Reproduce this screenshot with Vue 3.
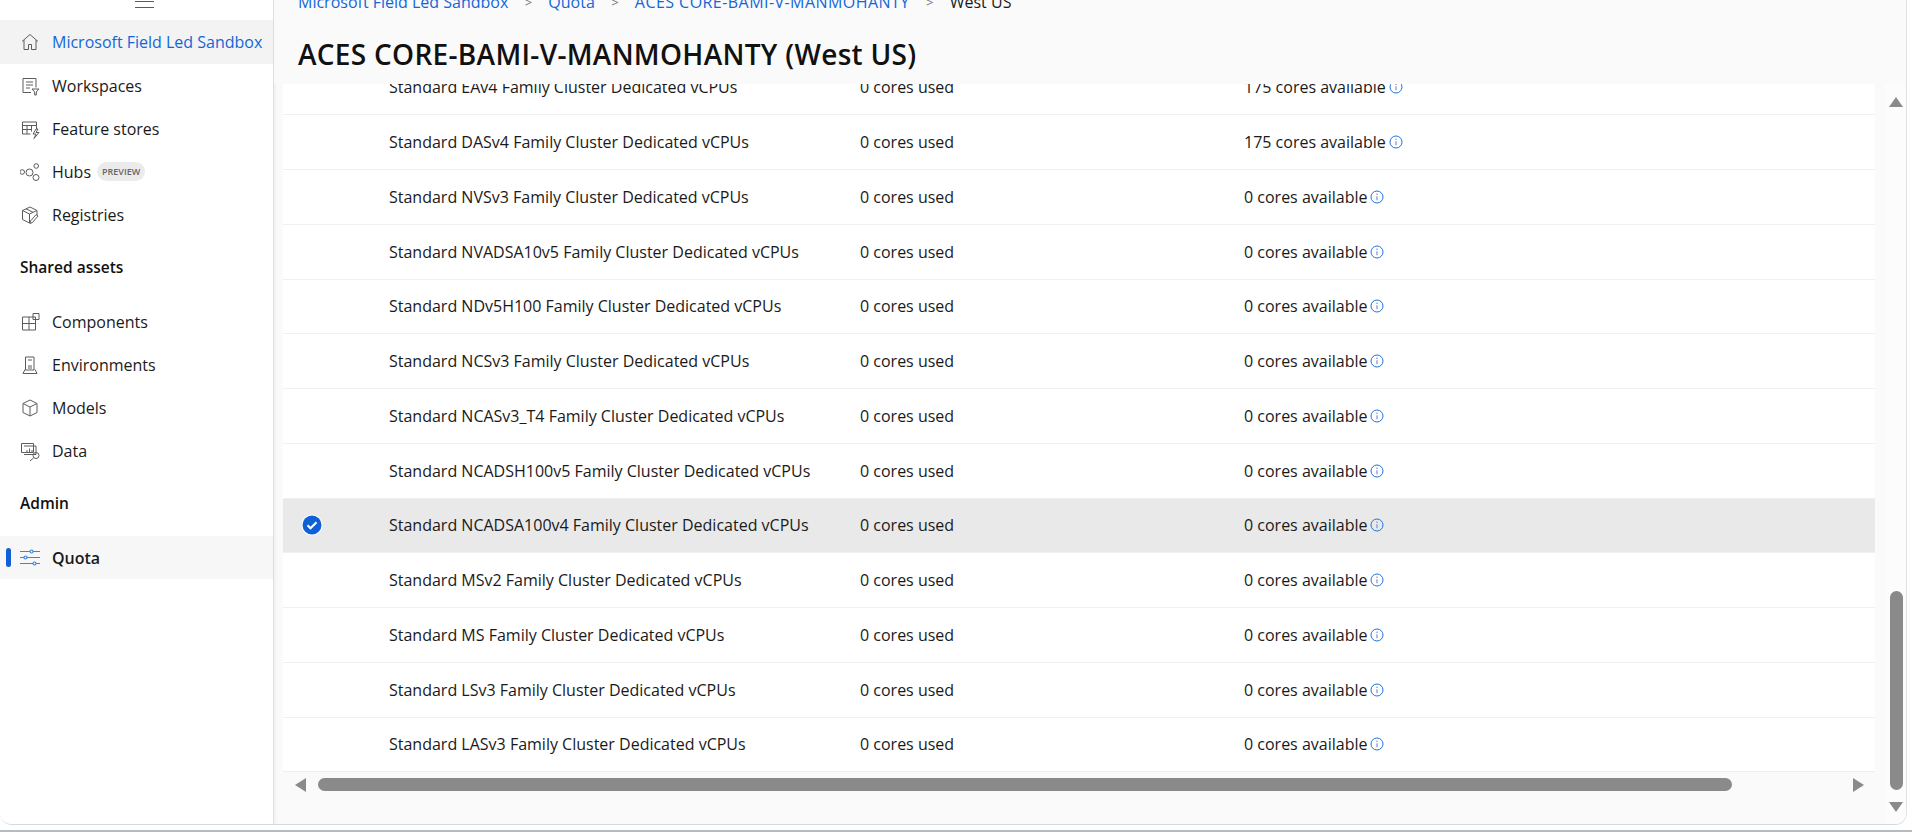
<script setup>
const navTop = [
  { label: 'Workspaces', paths: ['M3 2.500h13v9M3 2.500v14h8', 'M6 6h7M6 9h7M6 12h4', 'M12 13h7l-2.700 3v3h-1.600v-3z'] },
  { label: 'Feature stores', paths: ['M2.500 3h14v7M2.500 3v12h8M2.500 6.500h14M2.500 10.500h9M7 6.500V15M11.500 6.500v6', 'M16 10l-3 5h3l-2 4.500 5-6h-3l2-3.500z'] },
  { label: 'Hubs', badge: 'PREVIEW', paths: ['M4.500 10a2.300 2.300 0 1 1-4.600 0 2.300 2.300 0 0 1 4.600 0z', 'M13 10.500a3.500 3.500 0 1 1-7 0 3.500 3.500 0 0 1 7 0z', 'M18.500 4a2.300 2.300 0 1 1-4.600 0 2.300 2.300 0 0 1 4.600 0zM19 15.500a3 3 0 1 1-6 0 3 3 0 0 1 6 0z'] },
  { label: 'Registries', paths: ['M2.500 5.500L10 2l7 3.500v5M2.500 5.500v9l7 3.500M2.500 5.500l7 3.500v9M9.500 9l7.500-3.500M6 3.800l7 3.500', 'M18 11l-5.500 6.500-2.500 1 .7-2.700L16.200 9.500z'] },
]
const navShared = [
  { label: 'Components', paths: ['M2.500 5h13v13h-13zM9 5v13M2.500 11.500h13', 'M13 1.500h6v6h-6z'] },
  { label: 'Environments', paths: ['M5.500 2h8.500v13H5.500zM8 5h4M8 11h4M8 13h4', 'M5 14.500L3 18.500h14l-2-4M3 18.500h14'] },
  { label: 'Models', paths: ['M10 2l7 3.500v9L10 18l-7-3.500v-9zM3 5.500l7 3.500 7-3.500M10 9v9'] },
  { label: 'Data', paths: ['M1.500 2.500h12v9h-12z', 'M4 5h12v8.500H4M7 11V9M9.500 11V7.500M12 11V9', 'M19 14.500a3 3 0 1 1-6 0 3 3 0 0 1 6 0zM13.500 17L10 20'] },
]

const rows = [
  { name: 'Standard EAv4 Family Cluster Dedicated vCPUs', available: 175 },
  { name: 'Standard DASv4 Family Cluster Dedicated vCPUs', available: 175 },
  { name: 'Standard NVSv3 Family Cluster Dedicated vCPUs', available: 0 },
  { name: 'Standard NVADSA10v5 Family Cluster Dedicated vCPUs', available: 0 },
  { name: 'Standard NDv5H100 Family Cluster Dedicated vCPUs', available: 0 },
  { name: 'Standard NCSv3 Family Cluster Dedicated vCPUs', available: 0 },
  { name: 'Standard NCASv3_T4 Family Cluster Dedicated vCPUs', available: 0 },
  { name: 'Standard NCADSH100v5 Family Cluster Dedicated vCPUs', available: 0 },
  { name: 'Standard NCADSA100v4 Family Cluster Dedicated vCPUs', available: 0, selected: true },
  { name: 'Standard MSv2 Family Cluster Dedicated vCPUs', available: 0 },
  { name: 'Standard MS Family Cluster Dedicated vCPUs', available: 0 },
  { name: 'Standard LSv3 Family Cluster Dedicated vCPUs', available: 0 },
  { name: 'Standard LASv3 Family Cluster Dedicated vCPUs', available: 0 },
]
</script>

<template>
  <div class="page">
    <div class="shell">
      <aside class="sidebar">
        <div class="burger"><span></span><span></span></div>
        <a class="nav-item home">
          <svg class="icon" viewBox="0 0 20 20"><path d="M2 9.500L10 2.500l8 7M4 8v9.500h4.500v-5h3v5H16V8" /></svg>
          Microsoft Field Led Sandbox
        </a>
        <a v-for="item in navTop" :key="item.label" class="nav-item">
          <svg class="icon" viewBox="0 0 20 20"><path v-for="d in item.paths" :key="d" :d="d" /></svg>
          {{ item.label }}
          <span v-if="item.badge" class="badge">{{ item.badge }}</span>
        </a>
        <h3 class="section">Shared assets</h3>
        <a v-for="item in navShared" :key="item.label" class="nav-item">
          <svg class="icon" viewBox="0 0 20 20"><path v-for="d in item.paths" :key="d" :d="d" /></svg>
          {{ item.label }}
        </a>
        <h3 class="section">Admin</h3>
        <a class="nav-item quota">
          <span class="marker"></span>
          <svg class="icon blue" viewBox="0 0 20 20">
            <path d="M0 3.500h10M13 3.500h7M0 9.500h4M7 9.500h13M0 15.500h13M16 15.500h4" />
            <circle cx="11.500" cy="3.500" r="1.500" /><circle cx="5.500" cy="9.500" r="1.500" /><circle cx="14.500" cy="15.500" r="1.500" />
          </svg>
          Quota
        </a>
      </aside>

      <main class="content">
        <header class="head">
          <nav class="crumbs">
            <a>Microsoft Field Led Sandbox</a><i>&gt;</i>
            <a>Quota</a><i>&gt;</i>
            <a class="caps">ACES CORE-BAMI-V-MANMOHANTY</a><i>&gt;</i>
            <span>West US</span>
          </nav>
          <h1>ACES CORE-BAMI-V-MANMOHANTY (West US)</h1>
        </header>

        <div class="table-area">
          <div class="table-wrap">
            <div class="table">
              <div v-for="row in rows" :key="row.name" class="row" :class="{ selected: row.selected }">
                <div class="check">
                  <svg v-if="row.selected" width="22" height="22" viewBox="0 0 22 22">
                    <circle cx="11" cy="11" r="10.500" fill="#fff" />
                    <circle cx="11" cy="11" r="9.500" fill="#0f5fd7" />
                    <path d="M6.500 11.300l3 3 6-6" fill="none" stroke="#fff" stroke-width="2.200" />
                  </svg>
                </div>
                <div class="name">{{ row.name }}</div>
                <div class="used">0 cores used</div>
                <div class="avail">
                  {{ row.available }} cores available
                  <svg class="info" width="14" height="14" viewBox="0 0 14 14">
                    <circle cx="7" cy="7" r="6" fill="none" stroke="#1f74e0" />
                    <path d="M7 6.200v4" stroke="#7f8fd0" stroke-width="1.200" />
                    <circle cx="7" cy="4.200" r=".8" fill="#7f8fd0" />
                  </svg>
                </div>
              </div>
            </div>
            <div class="hbar">
              <span class="arrow left"></span>
              <span class="hthumb"></span>
              <span class="arrow right"></span>
            </div>
          </div>
          <div class="vbar">
            <span class="arrow up"></span>
            <div class="vtrack"><span class="vthumb"></span></div>
            <span class="arrow down"></span>
          </div>
        </div>
      </main>
    </div>
  </div>
</template>

<style>
html, body {
  margin: 0;
  background: #fff;
  overflow: hidden;
}
</style>

<style scoped>
.page {
  height: 832px;
  box-sizing: border-box;
  border-bottom: 2px solid #b4bcc2;
  overflow: hidden;
  font-family: "Open Sans", "Noto Sans", sans-serif;
  font-size: 16px;
  color: #1a1a1a;
}
.shell {
  display: flex;
  height: 825px;
  margin-right: 5px;
  border-right: 1px solid #e2e2e2;
  border-bottom: 1px solid #d8d8d8;
  border-radius: 0 0 12px 12px;
  overflow: hidden;
  box-sizing: border-box;
}
.sidebar {
  width: 273px;
  flex: none;
  background: #fff;
  border-right: 1px solid #dedede;
  box-shadow: 1px 0 4px rgba(0, 0, 0, 0.06);
  z-index: 1;
}
.burger {
  height: 20px;
  display: flex;
  flex-direction: column;
  align-items: center;
  gap: 5px;
  padding: 1px 0 0 16px;
  box-sizing: border-box;
}
.burger span {
  width: 19px;
  height: 1px;
  background: #1466d8;
}
.nav-item {
  display: flex;
  align-items: center;
  height: 43px;
  padding-left: 20px;
  position: relative;
  white-space: nowrap;
}
.home {
  height: 44px;
  background: #f3f3f3;
  color: #1466d8;
}
.icon {
  width: 20px;
  height: 20px;
  margin-right: 12px;
  flex: none;
  fill: none;
  stroke: #5c5c5c;
  stroke-width: 1;
}
.icon.blue {
  stroke: #3f86cf;
  stroke-width: 1.200;
}
.badge {
  margin-left: 6px;
  padding: 0 5px;
  height: 19px;
  line-height: 19px;
  border-radius: 10px;
  background: #ebebeb;
  color: #666;
  font-size: 9px;
  font-weight: 600;
}
.section {
  margin: 0;
  height: 64px;
  padding: 20px 0 0 20px;
  box-sizing: border-box;
  font-size: 15.500px;
  font-weight: 600;
  color: #111;
}
.quota {
  background: #f7f7f7;
  font-weight: 600;
}
.marker {
  position: absolute;
  left: 6px;
  top: 12px;
  width: 5px;
  height: 19px;
  border-radius: 3px;
  background: #0f5fd7;
}
.content {
  flex: 1;
  min-width: 0;
  background: #fafafa;
  display: flex;
  flex-direction: column;
  overflow: hidden;
}
.head {
  height: 84px;
  flex: none;
  padding-left: 24px;
  box-sizing: border-box;
  position: relative;
  z-index: 1;
  background: #fafafa;
  overflow: hidden;
}
.crumbs {
  display: flex;
  align-items: center;
  height: 20px;
  margin-top: -8px;
  white-space: nowrap;
  color: #1466d8;
}
.crumbs i {
  width: 40px;
  text-align: center;
  color: #777;
  font-style: normal;
  font-size: 13px;
}
.crumbs .caps {
  letter-spacing: 0.450px;
}
.crumbs span {
  color: #1a1a1a;
}
h1 {
  margin: 23px 0 0;
  font-size: 28px;
  line-height: 38px;
  letter-spacing: 0.300px;
  font-weight: 600;
  color: #111;
  white-space: nowrap;
}
.table-area {
  flex: 1;
  display: flex;
  min-height: 0;
  padding-left: 9px;
}
.table-wrap {
  width: 1592px;
  flex: none;
  overflow: hidden;
}
.table {
  height: 688px;
  overflow: hidden;
  background: #fff;
  border-bottom: 1px solid #eee;
  box-sizing: border-box;
}
.row {
  display: grid;
  grid-template-columns: 106px 471px 384px 1fr;
  align-items: center;
  height: 54.750px;
  box-sizing: border-box;
  border-bottom: 1px solid #f0f0f0;
  white-space: nowrap;
}
.row:first-child {
  margin-top: -23.400px;
}
.row.selected {
  background: #e9e9e9;
}
.check {
  display: flex;
  padding-left: 18px;
}
.avail {
  display: flex;
  align-items: center;
  gap: 3px;
}
.hbar {
  display: flex;
  align-items: center;
  height: 25px;
  padding: 0 11px 0 12px;
  box-sizing: border-box;
}
.hthumb {
  width: 1414px;
  height: 13px;
  margin-left: 12px;
  border-radius: 7px;
  background: #8a8a8a;
}
.vbar {
  width: 22px;
  margin-left: 10px;
  flex: none;
  background: #fcfcfc;
  display: flex;
  flex-direction: column;
  align-items: center;
  padding-top: 13px;
  box-sizing: border-box;
}
.vtrack {
  height: 695px;
  display: flex;
  flex-direction: column;
  justify-content: flex-end;
  padding-bottom: 12px;
  box-sizing: border-box;
}
.vthumb {
  display: block;
  width: 13px;
  height: 199px;
  border-radius: 7px;
  background: #8a8a8a;
}
.arrow {
  display: block;
  width: 0;
  height: 0;
  flex: none;
  border-style: solid;
  border-color: transparent;
}
.arrow.up {
  border-width: 0 7.500px 10px;
  border-bottom-color: #8a8a8a;
}
.arrow.down {
  border-width: 10px 7.500px 0;
  border-top-color: #8a8a8a;
}
.arrow.left {
  border-width: 7px 11px 7px 0;
  border-right-color: #8a8a8a;
}
.arrow.right {
  margin-left: auto;
  border-width: 7px 0 7px 11px;
  border-left-color: #8a8a8a;
}
</style>
